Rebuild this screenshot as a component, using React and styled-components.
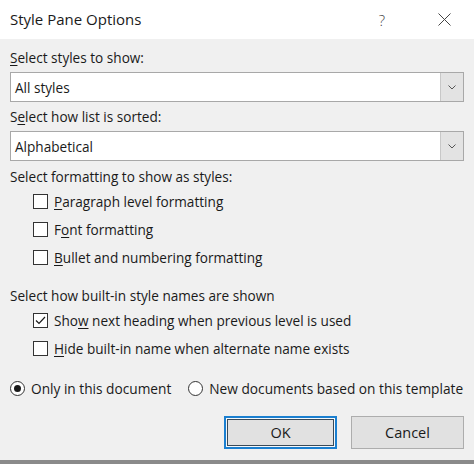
import React from 'react';
import styled, { createGlobalStyle } from 'styled-components';

const GlobalStyle = createGlobalStyle`
  html, body {
    margin: 0;
    padding: 0;
    background: #f0f0f0;
  }
  body {
    font-family: "Open Sans", "Noto Sans", sans-serif;
    color: #1a1a1a;
  }
`;

const Dialog = styled.div`
  width: 474px;
  height: 464px;
  display: flex;
  flex-direction: column;
  background: #f0f0f0;
  overflow: hidden;
`;

const TitleBar = styled.div`
  height: 39px;
  flex: none;
  background: #fff;
  display: flex;
  align-items: center;
  padding-left: 10px;
`;

const Title = styled.div`
  flex: 1;
  font-size: 15px;
  color: #1a1a1a;
  margin-top: -1px;
`;

const TitleIcon = styled.div`
  width: ${p => p.w}px;
  margin-right: ${p => p.mr || 0}px;
  height: 39px;
  display: flex;
  align-items: center;
  justify-content: center;
  color: #444;
  font-size: 15px;
  font-weight: 300;
`;

const Body = styled.div`
  flex: 1;
  padding: 9px 10px 0 10px;
  display: flex;
  flex-direction: column;
`;

const Label = styled.div`
  height: 20px;
  line-height: 20px;
  font-size: 13.6px;
  white-space: nowrap;
  margin-top: ${p => p.mt || 0}px;
  u {
    text-decoration-thickness: 1px;
    text-underline-offset: 2px;
  }
`;

const SelectBox = styled.div`
  height: 28px;
  margin-top: ${p => p.mt || 0}px;
  border: 1px solid #a8a8a8;
  background: #fff;
  display: flex;
  align-items: center;
`;

const SelectValue = styled.div`
  flex: 1;
  padding-left: 4px;
  font-size: 13.6px;
`;

const DropButton = styled.div`
  width: 22px;
  height: 28px;
  background: #e3e3e3;
  border-left: 1px solid #c8c8c8;
  display: flex;
  align-items: center;
  justify-content: center;
`;

const OptionList = styled.div`
  display: flex;
  flex-direction: column;
  padding-left: 23px;
`;

const OptionRow = styled.label`
  height: 28px;
  display: flex;
  align-items: center;
  gap: 6px;
  font-size: 13.6px;
  white-space: nowrap;
  u {
    text-decoration-thickness: 1px;
    text-underline-offset: 2px;
  }
`;

const Box = styled.span`
  width: 13px;
  height: 13px;
  border: 1px solid #333;
  background: #fff;
  display: flex;
  align-items: center;
  justify-content: center;
  flex: none;
`;

const RadioRow = styled.div`
  height: 20px;
  margin-top: 16px;
  display: flex;
  align-items: center;
  font-size: 13.7px;
  white-space: nowrap;
`;

const Radio = styled.label`
  display: flex;
  align-items: center;
  gap: 6px;
  margin-right: 17px;
`;

const Circle = styled.span`
  width: 13px;
  height: 13px;
  border: 1px solid #333;
  border-radius: 50%;
  background: #fff;
  display: flex;
  align-items: center;
  justify-content: center;
  flex: none;
  &::after {
    content: '';
    display: ${p => (p.checked ? 'block' : 'none')};
    width: 7px;
    height: 7px;
    border-radius: 50%;
    background: #1a1a1a;
  }
`;

const ButtonRow = styled.div`
  display: flex;
  justify-content: flex-end;
  gap: 14px;
  margin-top: 18px;
`;

const Button = styled.button`
  width: 113px;
  height: 33px;
  box-sizing: border-box;
  font-family: inherit;
  font-size: 14.5px;
  color: #1a1a1a;
  background: #e1e1e1;
  border: ${p => (p.primary ? '2px solid #1a7fd0' : '1px solid #adadad')};
  box-shadow: ${p => (p.primary ? 'inset 0 0 0 1px #f4f8fb, inset 0 0 0 2px #3a4a58' : 'none')};
  padding: 0;
`;

const BottomEdge = styled.div`
  height: 4px;
  flex: none;
  margin-top: auto;
  background: #8a8a8a;
`;

const Chevron = () => (
  <svg width="8" height="5" viewBox="0 0 8 5">
    <path d="M0.5 0.5 L4 4 L7.5 0.5" fill="none" stroke="#555" strokeWidth="1" />
  </svg>
);

const Check = () => (
  <svg width="11" height="9" viewBox="0 0 11 9">
    <path d="M1 4.5 L4 7.5 L10 1" fill="none" stroke="#1a1a1a" strokeWidth="1.2" />
  </svg>
);

const Select = ({ value, mt }) => (
  <SelectBox mt={mt}>
    <SelectValue>{value}</SelectValue>
    <DropButton><Chevron /></DropButton>
  </SelectBox>
);

const Option = ({ checked, children }) => (
  <OptionRow>
    <Box>{checked && <Check />}</Box>
    <span>{children}</span>
  </OptionRow>
);

export default function App() {
  return (
    <>
      <GlobalStyle />
      <Dialog>
        <TitleBar>
          <Title>Style Pane Options</Title>
          <TitleIcon w={30} mr={17}>?</TitleIcon>
          <TitleIcon w={60}>
            <svg width="13" height="13" viewBox="0 0 13 13">
              <path d="M0.5 0.5 L12.5 12.5 M12.5 0.5 L0.5 12.5" stroke="#444" strokeWidth="1" />
            </svg>
          </TitleIcon>
        </TitleBar>
        <Body>
          <Label><u>S</u>elect styles to show:</Label>
          <Select value="All styles" mt={4} />
          <Label mt={5}>S<u>e</u>lect how list is sorted:</Label>
          <Select value="Alphabetical" mt={4} />
          <Label mt={6}>Select formatting to show as styles:</Label>
          <OptionList>
            <Option><u>P</u>aragraph level formatting</Option>
            <Option>F<u>o</u>nt formatting</Option>
            <Option><u>B</u>ullet and numbering formatting</Option>
          </OptionList>
          <Label mt={15}>Select how built-in style names are shown</Label>
          <OptionList>
            <Option checked>Sho<u>w</u> next heading when previous level is used</Option>
            <Option><u>H</u>ide built-in name when alternate name exists</Option>
          </OptionList>
          <RadioRow>
            <Radio><Circle checked />Only in this document</Radio>
            <Radio><Circle />New documents based on this template</Radio>
          </RadioRow>
          <ButtonRow>
            <Button primary>OK</Button>
            <Button>Cancel</Button>
          </ButtonRow>
        </Body>
        <BottomEdge />
      </Dialog>
    </>
  );
}
